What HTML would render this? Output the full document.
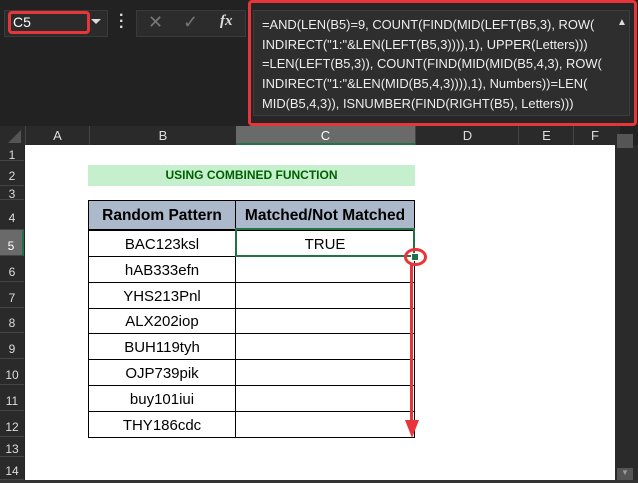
<!DOCTYPE html><html><head><style>
body{margin:0;width:638px;height:483px;background:#222;position:relative;overflow:hidden;font-family:"Liberation Sans",sans-serif}
.a{position:absolute}
.hdr{color:#ddd;font-size:13px;text-align:center}
.fx{font-family:"Liberation Sans",sans-serif;color:#eee;font-size:12.9px;line-height:19.7px}
.cell{position:absolute;border:1px solid #000;box-sizing:border-box;text-align:center;font-size:15px;color:#000}
</style></head><body>
<div class="a" style="left:4px;top:10px;width:102px;height:25px;background:#2b2b2b;border:1px solid #3a3a3a"></div>
<div class="a" style="left:8px;top:11px;width:74px;height:17px;border:3px solid #e8353a;border-radius:4px;color:#fff;font-size:14px;line-height:17px;padding-left:2px">C5</div>
<div class="a" style="left:91px;top:19px;border-left:5px solid transparent;border-right:5px solid transparent;border-top:5px solid #ddd"></div>
<div class="a" style="left:119px;top:13px;color:#ddd;font-size:16px;font-weight:bold;line-height:6px">·<br>·<br>·</div>
<div class="a" style="left:136px;top:10px;width:108px;height:25px;background:#2c2c2c;border:1px solid #3a3a3a"></div>
<div class="a" style="left:148px;top:12px;color:#777;font-size:18px">✕</div>
<div class="a" style="left:183px;top:12px;color:#777;font-size:18px">✓</div>
<div class="a" style="left:220px;top:13px;color:#ddd;font-size:15px;font-style:italic;font-family:'Liberation Serif',serif;font-weight:bold">fx</div>
<div class="a" style="left:248px;top:0;width:383px;height:120px;border:3px solid #e8353a;border-radius:4px;background:#262626"></div>
<div class="a" style="left:253px;top:10px;width:375px;height:104px;background:#2e2e2e;border:1px solid #3c3c3c"></div>
<div class="a fx" style="left:262px;top:15px;white-space:pre">=AND(LEN(B5)=9, COUNT(FIND(MID(LEFT(B5,3), ROW(
INDIRECT("1:"&amp;LEN(LEFT(B5,3)))),1), UPPER(Letters)))
=LEN(LEFT(B5,3)), COUNT(FIND(MID(MID(B5,4,3), ROW(
INDIRECT("1:"&amp;LEN(MID(B5,4,3)))),1), Numbers))=LEN(
MID(B5,4,3)), ISNUMBER(FIND(RIGHT(B5), Letters)))</div>
<div class="a" style="left:617px;top:17px;color:#ddd;font-size:10px">▲</div>
<div class="a" style="left:0;top:126px;width:620px;height:19px;background:#2a2a2a"></div>
<div class="a" style="left:8px;top:130px;border-left:13px solid transparent;border-bottom:13px solid #555"></div>
<div class="a hdr" style="left:25px;top:126px;width:63px;line-height:19px;border-left:1px solid #444">A</div>
<div class="a hdr" style="left:89px;top:126px;width:146px;line-height:19px;border-left:1px solid #444">B</div>
<div class="a hdr" style="left:236px;top:126px;width:179px;height:17px;line-height:19px;background:#6a6a6a;border-bottom:2px solid #217346;color:#fff">C</div>
<div class="a hdr" style="left:415px;top:126px;width:103px;line-height:19px;border-left:1px solid #444">D</div>
<div class="a hdr" style="left:518px;top:126px;width:55px;line-height:19px;border-left:1px solid #444">E</div>
<div class="a hdr" style="left:573px;top:126px;width:42px;line-height:19px;border-left:1px solid #444">F</div>
<div class="a" style="left:25px;top:145px;width:590px;height:335px;background:#fff"></div>
<div class="a" style="left:615px;top:145px;width:23px;height:338px;background:#2a2a2a"></div>
<div class="a" style="left:617px;top:134px;width:16px;height:14px;background:#555"></div>
<div class="a" style="left:617px;top:468px;width:16px;height:12px;background:#555;color:#999;font-size:8px;text-align:center">▼</div>
<div class="a" style="left:0;top:145px;width:24px;height:338px;background:#2a2a2a"></div>
<div id="rh"></div>
<div class="a" style="left:0;top:480px;width:638px;height:3px;background:#333"></div>
<div class="a" style="left:88px;top:165px;width:327px;height:21px;background:#c6efce;color:#006100;font-weight:bold;font-size:12px;text-align:center;line-height:21px">USING COMBINED FUNCTION</div>
<div class="cell" style="left:88px;top:200px;width:148px;height:30px;background:#acb9ca;font-weight:bold;font-size:15.5px;line-height:29px">Random Pattern</div>
<div class="cell" style="left:235px;top:200px;width:180px;height:30px;background:#acb9ca;font-weight:bold;font-size:15.5px;line-height:29px">Matched/Not Matched</div>
<div id="rows"></div>
<div class="a" style="left:235px;top:228px;width:180px;height:29px;border:2px solid #217346;box-sizing:border-box"></div>
<div class="a" style="left:404px;top:248px;width:23px;height:18px;border:3px solid #e8353a;border-radius:50%;box-sizing:border-box"></div>
<div class="a" style="left:411px;top:253px;width:6px;height:6px;background:#217346;border:1px solid #fff"></div>
<div class="a" style="left:410px;top:265px;width:3px;height:160px;background:#e8353a"></div>
<div class="a" style="left:405px;top:420px;border-left:7px solid transparent;border-right:7px solid transparent;border-top:18px solid #e8353a"></div>
<script>
var rh=[[1,145,161],[2,161,186],[3,186,200],[4,200,230],[5,230,256],[6,256,282],[7,282,308],[8,308,333],[9,333,359],[10,359,385],[11,385,411],[12,411,437],[13,437,457],[14,457,480]],h='';
rh.forEach(function(r){h+='<div class="a" style="left:0;top:'+r[1]+'px;width:24px;height:'+(r[2]-r[1]-1)+'px;border-bottom:1px solid #444;color:'+(r[0]==5?'#fff':'#ddd')+';background:'+(r[0]==5?'#6a6a6a':'#2a2a2a')+';font-size:12px;text-align:center;line-height:'+((r[2]-r[1])*1.25)+'px;overflow:hidden'+(r[0]==5?';border-right:2px solid #217346;width:22px':'')+'">'+r[0]+'</div>';});
document.getElementById('rh').innerHTML=h;
var v=['BAC123ksl','hAB333efn','YHS213Pnl','ALX202iop','BUH119tyh','OJP739pik','buy101iui','THY186cdc'],s='';
v.forEach(function(t,i){var top=rh[i+4][1],ht=rh[i+4][2]-top+1;
s+='<div class="cell" style="left:88px;top:'+top+'px;width:148px;height:'+ht+'px;line-height:'+ht+'px">'+t+'</div><div class="cell" style="left:235px;top:'+top+'px;width:180px;height:'+ht+'px;line-height:'+ht+'px">'+(i==0?'TRUE':'')+'</div>';});
document.getElementById('rows').innerHTML=s;
</script>
</body></html>
